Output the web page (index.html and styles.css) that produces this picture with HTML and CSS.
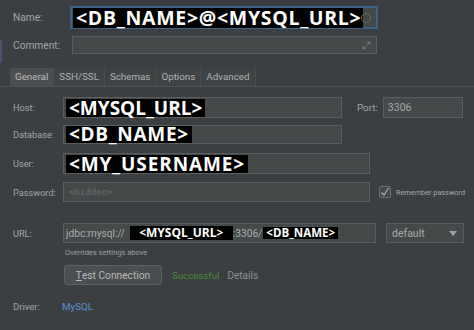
FILE: index.html
```html
<!DOCTYPE html>
<html>
<head>
<meta charset="utf-8">
<link rel="stylesheet" href="styles.css">
</head>
<body>
<div class="edge-mark"></div>
<div class="dialog">
  <div class="row row-name">
    <span class="label top-label">Name:</span>
    <div class="field field-name">
      <span class="mask mask-name">&lt;DB_NAME&gt;@&lt;MYSQL_URL&gt;</span>
      <span class="spinner"></span>
    </div>
  </div>
  <div class="row row-comment">
    <span class="label top-label">Comment:</span>
    <div class="field field-comment">
      <svg class="expand" width="9" height="9" viewBox="0 0 9 9"><path d="M5 1h3v3M8 1L5 4M1 5v3h3M1 8l3-3" stroke="#7a7d80" stroke-width="1" fill="none"/></svg>
    </div>
  </div>
  <div class="tabs">
    <span class="tab tab-active">General</span>
    <span class="tab">SSH/SSL</span>
    <span class="tab">Schemas</span>
    <span class="tab">Options</span>
    <span class="tab">Advanced</span>
  </div>
  <div class="panel">
    <div class="row row-host">
      <span class="label">Host:</span>
      <div class="field field-host"><span class="mask mask-host">&lt;MYSQL_URL&gt;</span></div>
      <span class="label port-label">Port:</span>
      <div class="field field-port"><span class="value">3306</span></div>
    </div>
    <div class="row row-db">
      <span class="label">Database:</span>
      <div class="field field-db"><span class="mask mask-db">&lt;DB_NAME&gt;</span></div>
    </div>
    <div class="row row-user">
      <span class="label">User:</span>
      <div class="field field-user"><span class="mask mask-user">&lt;MY_USERNAME&gt;</span></div>
    </div>
    <div class="row row-pass">
      <span class="label">Password:</span>
      <div class="field field-pass"><span class="placeholder">&lt;hidden&gt;</span></div>
      <span class="checkbox"><svg width="10" height="10" viewBox="0 0 10 10"><path d="M1.5 5.5l2.5 2.5 4.5-7" stroke="#a9acae" stroke-width="1.3" fill="none"/></svg></span>
      <span class="remember">Remember password</span>
    </div>
    <div class="row row-url">
      <span class="label">URL:</span>
      <div class="field field-url">
        <span class="value url-text">jdbc:mysql://</span><span class="mask mask-url">&lt;MYSQL_URL&gt;</span><span class="value url-text">:3306/</span><span class="mask mask-url2">&lt;DB_NAME&gt;</span>
      </div>
      <div class="field field-select">
        <span class="value">default</span>
        <svg class="caret" width="8" height="5" viewBox="0 0 8 5"><path d="M0 0h8L4 5z" fill="#a0a3a5"/></svg>
      </div>
    </div>
    <div class="hint">Overrides settings above</div>
    <div class="row row-test">
      <span class="button"><u>T</u>est Connection</span>
      <span class="success">Successful</span>
      <span class="details">Details</span>
    </div>
    <div class="row row-driver">
      <span class="label">Driver:</span>
      <span class="link">MySQL</span>
    </div>
  </div>
</div>
</body>
</html>
```
FILE: styles.css
```css
html, body {
  margin: 0;
  padding: 0;
  background: #3c3f41;
  width: 474px;
  height: 330px;
  overflow: hidden;
}
body {
  font-family: Roboto, "Liberation Sans", sans-serif;
  font-size: 10px;
  color: #bbbbbb;
  position: relative;
}
.edge-mark {
  position: absolute;
  left: 0;
  top: 40px;
  width: 2px;
  height: 23px;
  background: #4a5670;
}
.dialog {
  display: flex;
  flex-direction: column;
}
.row {
  display: flex;
  align-items: center;
  padding-left: 13px;
}
.label {
  color: #a2a4a6;
  width: 50px;
  flex: none;
  font-size: 9.2px;
  white-space: nowrap;
}
.top-label {
  width: 57px;
  font-size: 10.2px;
}
.field {
  box-sizing: border-box;
  background: #45494a;
  border: 1px solid #5b5e60;
  display: flex;
  align-items: center;
  flex: none;
}
.mask {
  background: #000;
  color: #fff;
  font-family: "Open Sans", sans-serif;
  font-weight: 700;
  white-space: nowrap;
}
.row-name {
  margin-top: 6px;
  height: 23px;
}
.field-name {
  width: 308px;
  height: 23px;
  border: 2px solid #3f628a;
  padding-left: 1px;
  position: relative;
}
.mask-name {
  font-size: 19.5px;
  line-height: 20px;
  height: 20px;
  padding: 0 2px 0 3px;
  letter-spacing: 0.7px;
}
.spinner {
  position: absolute;
  right: 5px;
  top: 5px;
  width: 8px;
  height: 8px;
  border: 1px solid #6a6a5a;
  border-radius: 50%;
}
.row-comment {
  margin-top: 7px;
  height: 18px;
}
.top-label + .field-comment {
  margin-left: 2px;
}
.field-comment {
  width: 305px;
  height: 18px;
  justify-content: flex-end;
  padding-right: 5px;
}
.tabs {
  margin-top: 14px;
  margin-left: 10px;
  display: flex;
  height: 18px;
}
.tab {
  padding: 0 5px;
  line-height: 18px;
  font-size: 9.8px;
  background: #404345;
  border-right: 1px solid #4a4d4f;
  color: #b0b2b4;
}
.tab-active {
  background: #4b4f52;
  color: #bbbbbb;
}
.panel {
  border-top: 1px solid #505355;
  display: flex;
  flex-direction: column;
}
.row-host {
  margin-top: 10px;
  height: 21px;
}
.field-host {
  width: 279px;
  height: 21px;
  padding-left: 2px;
}
.mask-host {
  font-size: 19px;
  line-height: 18px;
  padding: 0 3px;
}
.port-label {
  width: auto;
  margin-left: 15px;
  margin-right: 5px;
  font-size: 9.8px;
}
.field-port {
  width: 80px;
  height: 21px;
  padding-left: 4px;
}
.value {
  color: #a9abad;
  white-space: nowrap;
  font-size: 10.5px;
}
.row-db {
  margin-top: 7px;
  height: 19px;
}
.field-db {
  width: 279px;
  height: 19px;
  padding-left: 2px;
}
.mask-db {
  font-size: 19px;
  line-height: 17px;
  padding: 0 3px;
  letter-spacing: 0.7px;
}
.row-user {
  margin-top: 9px;
  height: 21px;
}
.field-user {
  width: 307px;
  height: 21px;
  padding-left: 2px;
}
.mask-user {
  font-size: 19px;
  line-height: 18px;
  padding: 0 3px;
  letter-spacing: 0.9px;
}
.row-pass {
  margin-top: 8px;
  height: 20px;
}
.field-pass {
  width: 307px;
  height: 20px;
  padding-left: 5px;
}
.placeholder {
  font-family: "DejaVu Sans Mono", monospace;
  font-size: 9px;
  color: #6b6e70;
}
.checkbox {
  margin-left: 9px;
  width: 12px;
  height: 12px;
  box-sizing: border-box;
  border: 1px solid #6b6e70;
  background: #45494a;
  border-radius: 2px;
  display: flex;
  align-items: center;
  justify-content: center;
}
.remember {
  margin-left: 5px;
  font-size: 7.3px;
  color: #a5a7a9;
  white-space: nowrap;
}
.row-url {
  margin-top: 21px;
  height: 20px;
}
.field-url {
  width: 313px;
  height: 20px;
  padding-left: 2px;
}
.url-text {
  font-size: 10.2px;
}
.mask-url {
  font-size: 12px;
  line-height: 14px;
  width: 103px;
  text-align: center;
  margin-left: 5px;
}
.mask-url2 {
  font-size: 11.5px;
  line-height: 12px;
  padding: 0 3px;
  margin-left: 1px;
}
.field-select {
  width: 78px;
  height: 20px;
  margin-left: 10px;
  padding: 0 6px 0 5px;
  justify-content: space-between;
}
.field-select .value {
  font-size: 10.5px;
}
.hint {
  margin-left: 65px;
  font-size: 7.5px;
  color: #9c9ea0;
  line-height: 12px;
  margin-top: 4px;
}
.row-test {
  margin-top: 6px;
  padding-left: 64px;
  height: 20px;
}
.button {
  box-sizing: border-box;
  width: 98px;
  height: 20px;
  border: 1px solid #5e6163;
  border-radius: 3px;
  background: #4a4e50;
  color: #bbbbbb;
  font-size: 10.2px;
  display: flex;
  align-items: center;
  justify-content: center;
}
.button u {
  text-decoration-thickness: 1px;
}
.success {
  margin-left: 10px;
  color: #4c8c3e;
  font-size: 9.7px;
}
.details {
  margin-left: 8px;
  color: #8c8e90;
  font-size: 10px;
}
.row-driver {
  margin-top: 14px;
  height: 14px;
}
.row-driver .label {
  width: 49px;
  font-size: 9.5px;
}
.link {
  color: #5a8fd4;
  font-size: 9.8px;
}
```
